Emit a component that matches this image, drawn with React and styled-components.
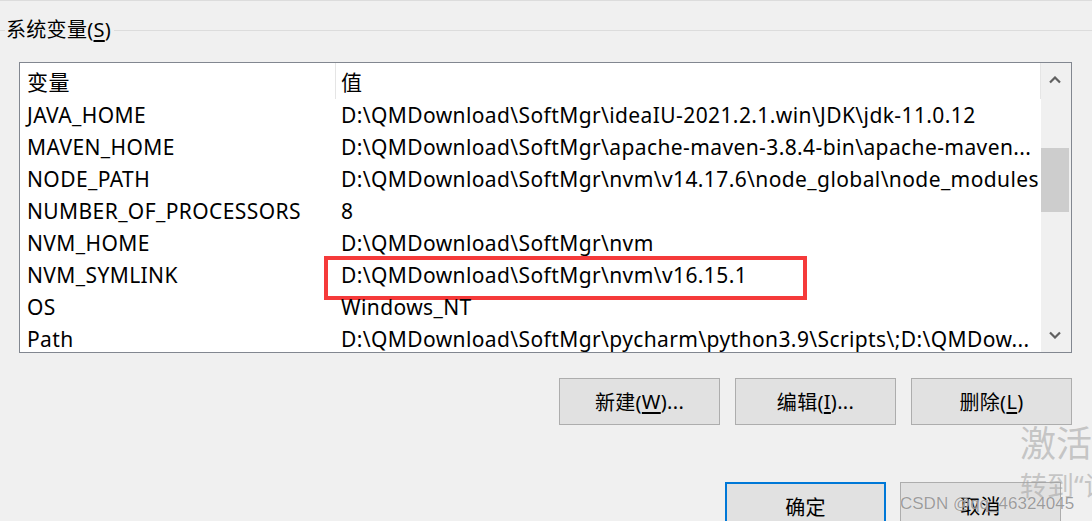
import React from 'react'
import styled, { createGlobalStyle } from 'styled-components'

const GlobalStyle = createGlobalStyle`
    html, body {
        margin: 0;
        padding: 0;
        background: #f0f0f0;
    }
    body {
        font-family: "Noto Sans", "Noto Sans CJK SC", sans-serif;
        color: #000;
    }
`;

const vars = [
    ['JAVA_HOME', 'D:\\QMDownload\\SoftMgr\\ideaIU-2021.2.1.win\\JDK\\jdk-11.0.12'],
    ['MAVEN_HOME', 'D:\\QMDownload\\SoftMgr\\apache-maven-3.8.4-bin\\apache-maven...'],
    ['NODE_PATH', 'D:\\QMDownload\\SoftMgr\\nvm\\v14.17.6\\node_global\\node_modules'],
    ['NUMBER_OF_PROCESSORS', '8'],
    ['NVM_HOME', 'D:\\QMDownload\\SoftMgr\\nvm'],
    ['NVM_SYMLINK', 'D:\\QMDownload\\SoftMgr\\nvm\\v16.15.1', true],
    ['OS', 'Windows_NT'],
    ['Path', 'D:\\QMDownload\\SoftMgr\\pycharm\\python3.9\\Scripts\\;D:\\QMDow...'],
]

function Chevron({ down }) {
    return (
        <svg width="12" height="8" viewBox="0 0 12 8">
            <path
                d={down ? 'M1 1.5 L6 6.5 L11 1.5' : 'M1 6.5 L6 1.5 L11 6.5'}
                fill="none"
                stroke="#606060"
                strokeWidth="2.2"
            />
        </svg>
    )
}

function App() {
    return (
        <Dialog>
            <GlobalStyle />
            <GroupTitle>
                <span className="lead" />
                <span className="label">系统变量(<u>S</u>)</span>
                <span className="rule" />
            </GroupTitle>

            <ListBox>
                <Table>
                    <Row header>
                        <NameCell>变量</NameCell>
                        <ValueCell divider>值</ValueCell>
                    </Row>
                    {vars.map(([name, value, marked]) => (
                        <Row key={name}>
                            <NameCell>{name}</NameCell>
                            <ValueCell>
                                {value}
                                {marked && <Highlight />}
                            </ValueCell>
                        </Row>
                    ))}
                </Table>
                <ScrollBar>
                    <ArrowButton><Chevron /></ArrowButton>
                    <Track>
                        <Thumb />
                    </Track>
                    <ArrowButton><Chevron down /></ArrowButton>
                </ScrollBar>
            </ListBox>

            <ActionRow>
                <Button>新建(<u>W</u>)...</Button>
                <Button>编辑(<u>I</u>)...</Button>
                <Button>删除(<u>L</u>)</Button>
            </ActionRow>

            <Separator />

            <FooterRow>
                <Button primary>确定</Button>
                <Button>取消</Button>
            </FooterRow>

            <Activation>
                <div className="big">激活 Windows</div>
                <div className="small">转到“设置”以激活 Windows。</div>
            </Activation>
            <Credit>CSDN @qq_46324045</Credit>
        </Dialog>
    )
}

const Dialog = styled.div`
    position: relative;
    width: 1092px;
    height: 521px;
    overflow: hidden;
    border-top: 1px solid #dcdcdc;
    box-sizing: border-box;
    font-size: 20px;
    display: flex;
    flex-direction: column;
`;

const GroupTitle = styled.div`
    display: flex;
    align-items: center;
    height: 24px;
    margin-top: 17px;
    .lead{
        width: 5px;
        height: 1px;
        background: #dcdcdc;
    }
    .label{
        padding: 0 3px 0 1px;
        line-height: 24px;
        white-space: nowrap;
        letter-spacing: 0.3px;
    }
    .rule{
        flex: 1;
        height: 1px;
        background: #dcdcdc;
    }
    u{
        text-underline-offset: 3px;
    }
`;

const ListBox = styled.div`
    display: flex;
    margin: 20px 0 0 19px;
    width: 1053px;
    height: 291px;
    box-sizing: border-box;
    border: 1px solid #828790;
    background: #fff;
`;

const Table = styled.div`
    flex: 1;
    overflow: hidden;
    display: flex;
    flex-direction: column;
    font-size: 21px;
    letter-spacing: 0.4px;
`;

const Row = styled.div`
    display: flex;
    align-items: center;
    flex-shrink: 0;
    height: ${p => p.header ? '36px' : '32px'};
    white-space: nowrap;
`;

const NameCell = styled.div`
    width: 315px;
    padding-left: 7px;
    box-sizing: border-box;
`;

const ValueCell = styled.div`
    position: relative;
    flex: 1;
    align-self: stretch;
    display: flex;
    align-items: center;
    padding-left: 5px;
    border-left: 1px solid ${p => p.divider ? '#e5e5e5' : 'transparent'};
    border-right: 1px solid ${p => p.divider ? '#e5e5e5' : 'transparent'};
`;

// red annotation frame drawn over the NVM_SYMLINK value
const Highlight = styled.span`
    position: absolute;
    left: -12px;
    top: -3px;
    width: 483px;
    height: 44px;
    box-sizing: border-box;
    border: 4px solid #f53a3a;
    pointer-events: none;
`;

const ScrollBar = styled.div`
    width: 30px;
    background: #f0f0f0;
    display: flex;
    flex-direction: column;
`;

const ArrowButton = styled.div`
    height: 34px;
    display: flex;
    align-items: center;
    justify-content: center;
    padding-right: 2px;
`;

const Track = styled.div`
    flex: 1;
    padding-top: 51px;
`;

const Thumb = styled.div`
    width: 28px;
    height: 64px;
    background: #cdcdcd;
`;

const ActionRow = styled.div`
    display: flex;
    justify-content: flex-end;
    gap: 15px;
    margin-top: 25px;
    padding-right: 20px;
`;

const Button = styled.div`
    width: 161px;
    height: 47px;
    box-sizing: border-box;
    display: flex;
    align-items: center;
    justify-content: center;
    background: #e1e1e1;
    border: ${p => p.primary ? '2px solid #0078d7' : '1px solid #adadad'};
    white-space: nowrap;
    flex-shrink: 0;
    letter-spacing: 0.3px;
    u{
        text-underline-offset: 3px;
    }
`;

const Separator = styled.div`
    height: 1px;
    background: #dadada;
    margin-top: 28px;
`;

const FooterRow = styled.div`
    display: flex;
    justify-content: flex-end;
    gap: 14px;
    margin-top: 29px;
    padding-right: 31px;
    ${Button}{
        height: 56px;
        align-items: flex-start;
        padding-top: 8px;
    }
`;

const Activation = styled.div`
    position: absolute;
    left: 1020px;
    top: 419px;
    color: rgba(160, 160, 160, 0.55);
    white-space: nowrap;
    .big{
        font-size: 36px;
        line-height: 48px;
    }
    .small{
        font-size: 27px;
        line-height: 36px;
    }
`;

const Credit = styled.div`
    position: absolute;
    left: 900px;
    top: 493px;
    font-family: "Liberation Sans", Arial, sans-serif;
    font-size: 17px;
    color: rgba(140, 140, 140, 0.85);
    text-shadow: 0 0 1px rgba(255, 255, 255, 0.8);
    white-space: nowrap;
`;

export default App
